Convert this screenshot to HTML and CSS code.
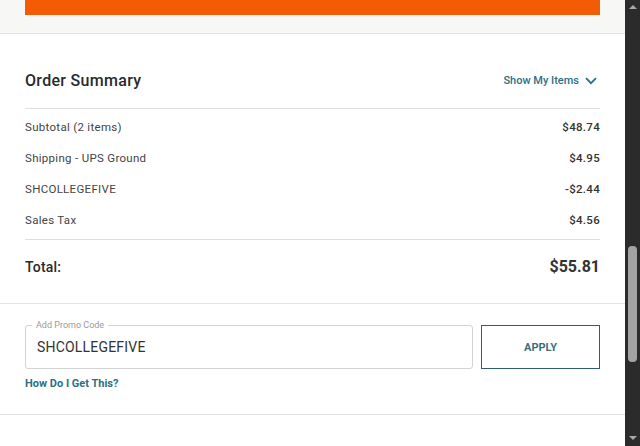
FILE: index.html
```html
<!DOCTYPE html>
<html>
<head>
<meta charset="utf-8">
<link rel="stylesheet" href="styles.css">
</head>
<body>
<div class="page">
  <main class="main">
    <div class="top">
      <div class="orange-bar"></div>
    </div>
    <section class="summary">
      <div class="summary-head">
        <h2 class="title">Order Summary</h2>
        <a class="show-items">Show My Items
          <svg class="chev" width="12" height="8" viewBox="0 0 12 8"><path d="M1 1.2 L6 6.2 L11 1.2" fill="none" stroke="#2b6f86" stroke-width="1.8"/></svg>
        </a>
      </div>
      <div class="rows">
        <div class="row"><span>Subtotal (2 items)</span><span class="amt">$48.74</span></div>
        <div class="row"><span>Shipping - UPS Ground</span><span class="amt">$4.95</span></div>
        <div class="row"><span>SHCOLLEGEFIVE</span><span class="amt">-$2.44</span></div>
        <div class="row"><span>Sales Tax</span><span class="amt">$4.56</span></div>
      </div>
      <div class="total-row">
        <span class="total-label">Total:</span>
        <span class="total-amt">$55.81</span>
      </div>
    </section>
    <section class="promo">
      <div class="promo-line">
        <div class="field">
          <span class="field-label">Add Promo Code</span>
          <span class="field-value">SHCOLLEGEFIVE</span>
        </div>
        <button class="apply">APPLY</button>
      </div>
      <a class="how">How Do I Get This?</a>
    </section>
  </main>
  <div class="scrollbar">
    <div class="arrow up"></div>
    <div class="track"><div class="thumb"></div></div>
    <div class="arrow down"></div>
  </div>
</div>
</body>
</html>
```
FILE: styles.css
```css
* { box-sizing: border-box; }
html, body { margin: 0; padding: 0; background: #fff; }
body { font-family: Roboto, "Liberation Sans", sans-serif; color: #333; }
.page { display: flex; width: 640px; height: 446px; overflow: hidden; }
.main { width: 625px; flex: none; background: #fff; }
.top {
  height: 34px;
  background: #f7f7f6;
  border-bottom: 1px solid #e4e4e4;
  padding: 0 25px;
}
.orange-bar { height: 15px; background: #f35b04; }
.summary { padding: 0 25px; border-bottom: 1px solid #e3e3e3; }
.summary-head {
  display: flex; justify-content: space-between; align-items: center;
  padding: 37px 0 17px;
  border-bottom: 1px solid #dedede;
}
.title { margin: 0; font-size: 16px; line-height: 20px; font-weight: 500; color: #2a2a2a; letter-spacing: 0.3px; }
.show-items {
  display: flex; align-items: center; gap: 6px;
  font-size: 11px; line-height: 20px; font-weight: 500; color: #2b6f86;
  padding-right: 3px;
}
.chev { display: block; }
.rows { padding: 2px 0 4px; border-bottom: 1px solid #dedede; }
.row {
  display: flex; justify-content: space-between; align-items: center;
  height: 31px; font-size: 11.5px; letter-spacing: 0.3px; color: #444;
}
.amt { color: #333; font-weight: 500; }
.total-row {
  display: flex; justify-content: space-between; align-items: center;
  padding: 17px 0 26px; line-height: 20px;
}
.total-label { font-size: 14px; font-weight: 500; color: #2a2a2a; letter-spacing: 0.2px; }
.total-amt { font-size: 16px; font-weight: 700; color: #333; }
.promo { padding: 21px 25px 23px; border-bottom: 1px solid #e3e3e3; }
.promo-line { display: flex; gap: 8px; }
.field {
  position: relative; flex: 1; height: 44px;
  border: 1px solid #d2d2d2; border-radius: 3px;
  display: flex; align-items: center; padding: 0 11px;
}
.field-label {
  position: absolute; top: -7px; left: 6px;
  background: #fff; padding: 0 4px;
  font-size: 9px; line-height: 12px; color: #9a9a9a;
}
.field-value { font-size: 14px; color: #333; letter-spacing: 0.2px; }
.apply {
  width: 119px; height: 44px; flex: none;
  background: #fff; border: 1px solid #2e5f6c; border-radius: 0;
  font-family: Roboto, "Liberation Sans", sans-serif;
  font-size: 11px; font-weight: 700; color: #3a6f80;
}
.how {
  display: block; margin-top: 8px;
  font-size: 11px; line-height: 14px; font-weight: 700; color: #2b6f86;
}
.scrollbar {
  width: 15px; flex: none; background: #2b2b2b;
  display: flex; flex-direction: column; align-items: center;
}
.arrow { width: 0; height: 0; border-left: 4px solid transparent; border-right: 4px solid transparent; }
.arrow.up { margin-top: 5px; border-bottom: 4px solid #a8a8a8; }
.arrow.down { margin-bottom: 6px; border-top: 4px solid #a8a8a8; }
.track { flex: 1; width: 100%; display: flex; justify-content: center; padding-top: 237px; }
.thumb { width: 9px; height: 116px; background: #a3a3a3; border-radius: 4px; }
```
